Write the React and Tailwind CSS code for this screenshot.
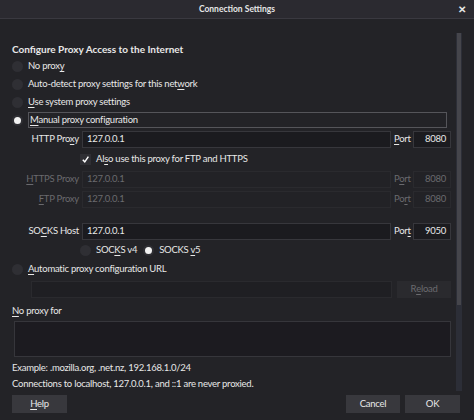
import React from "react";

const U = ({ children }) => <span className="underline underline-offset-[2px] decoration-[1px]">{children}</span>;

function Radio({ checked }) {
  return (
    <span className="w-[11px] h-[11px] rounded-full bg-[#2f2f34] flex items-center justify-center shrink-0">
      {checked && <span className="w-[7px] h-[7px] rounded-full bg-[#f2f2f2]" />}
    </span>
  );
}

function Input({ value, disabled, className = "" }) {
  return (
    <div
      className={`h-[17px] flex items-center px-[4px] border ${
        disabled ? "bg-[#222226] border-[#2a2a2e] text-[#6a6a6e]" : "bg-[#1b1b1f] border-[#37373c] text-[#e8e8e8]"
      } ${className}`}
    >
      {value}
    </div>
  );
}

function ProxyRow({ label, value, port, disabled, portLabel }) {
  const c = disabled ? "text-[#6a6a6e]" : "text-[#e8e8e8]";
  return (
    <div className="h-[18px] flex items-center">
      <div className={`w-[67px] text-right ${c} whitespace-nowrap`}>{label}</div>
      <Input value={value} disabled={disabled} className="ml-[3px] flex-1" />
      <div className={`w-[18px] ml-[3px] ${c}`}>{portLabel}</div>
      <Input value={port} disabled={disabled} className="ml-[1px] w-[38px] justify-end" />
    </div>
  );
}

export default function App() {
  return (
    <div
      className="w-[474px] h-[420px] bg-[#232327] text-[#e8e8e8] text-[9.5px] tracking-[-0.25px] leading-none flex flex-col overflow-hidden"
      style={{ fontFamily: 'Lato, "Open Sans", sans-serif' }}
    >
      <div className="h-[19px] shrink-0 bg-[#2b2a30] border-b border-[#3a3940] flex items-center relative">
        <div className="flex-1 text-center font-bold text-[8.5px] tracking-normal text-[#e6e6e6]">Connection Settings</div>
        <span className="absolute right-[8px] top-[4px] text-[10px] font-bold text-[#e6e6e6]">✕</span>
      </div>
      <div className="h-[374px] flex">
        <div className="flex-1 pl-[12px] pr-[4px] flex flex-col">
          <div className="mt-[22px] h-[16px] flex items-center text-[10px] tracking-normal font-bold">Configure Proxy Access to the Internet</div>
          <div className="h-[18px] flex items-center gap-[5px]">
            <Radio /> <span>No prox<U>y</U></span>
          </div>
          <div className="h-[18px] flex items-center gap-[5px]">
            <Radio /> <span>Auto-detect proxy settings for this net<U>w</U>ork</span>
          </div>
          <div className="h-[18px] flex items-center gap-[5px]">
            <Radio /> <span><U>U</U>se system proxy settings</span>
          </div>
          <div className="h-[18px] flex items-center gap-[5px]">
            <Radio checked />
            <span className="flex-1 mr-[4px] h-[16px] border border-[#55555a] flex items-center pl-[1px]">
              <span><U>M</U>anual proxy configuration</span>
            </span>
          </div>
          <div className="mt-[1px]">
            <ProxyRow label={<>HTTP Pro<U>x</U>y</>} value="127.0.0.1" port="8080" portLabel={<><U>P</U>ort</>} />
          </div>
          <div className="mt-[2px] h-[18px] flex items-center pl-[68px]">
            <span className="w-[11px] h-[11px] bg-[#2f2f34] flex items-center justify-center">
              <svg width="9" height="9" viewBox="0 0 10 10"><path d="M2 5.2 L4.2 7.6 L8.2 1.8" stroke="#fff" strokeWidth="1.6" fill="none" /></svg>
            </span>
            <span className="ml-[5px]">Al<U>s</U>o use this proxy for FTP and HTTPS</span>
          </div>
          <div className="mt-[2px]">
            <ProxyRow disabled label={<><U>H</U>TTPS Proxy</>} value="127.0.0.1" port="8080" portLabel={<>P<U>o</U>rt</>} />
          </div>
          <div className="mt-[2px]">
            <ProxyRow disabled label={<><U>F</U>TP Proxy</>} value="127.0.0.1" port="8080" portLabel={<>Po<U>r</U>t</>} />
          </div>
          <div className="mt-[14px]">
            <ProxyRow label={<>SO<U>C</U>KS Host</>} value="127.0.0.1" port="9050" portLabel={<>Por<U>t</U></>} />
          </div>
          <div className="mt-[1px] h-[18px] flex items-center pl-[68px]">
            <Radio />
            <span className="ml-[5px]">SOC<U>K</U>S v4</span>
            <span className="ml-[6px]"><Radio checked /></span>
            <span className="ml-[5px]">SOCKS <U>v</U>5</span>
          </div>
          <div className="mt-[1px] h-[18px] flex items-center gap-[5px]">
            <Radio /> <span><U>A</U>utomatic proxy configuration URL</span>
          </div>
          <div className="mt-[2px] h-[18px] flex items-center pl-[19px]">
            <Input value="" disabled className="flex-1 !bg-[#1f1f23]" />
            <div className="ml-[5px] w-[54px] h-[17px] bg-[#2a2a2e] flex items-center justify-center text-[#6a6a6e]">R<U>e</U>load</div>
          </div>
          <div className="mt-[4px] h-[18px] flex items-center">
            <span><U>N</U>o proxy for</span>
          </div>
          <div className="mt-[1px] ml-[2px] h-[36px] bg-[#1c1b20] border border-[#36363b]" />
          <div className="mt-[2px] h-[17px] flex items-center">Example: .mozilla.org, .net.nz, 192.168.1.0/24</div>
          <div className="h-[16px] flex items-center">Connections to localhost, 127.0.0.1, and ::1 are never proxied.</div>
        </div>
        <div className="w-[19px] flex">
          <div className="mt-[14px] ml-[1px] w-[6px] mb-[2px] bg-[#2c2e37] flex flex-col">
            <div className="h-[272px] bg-[#45454b] mx-[1px]" />
          </div>
        </div>
      </div>
      <div className="flex-1 flex items-start pl-[12px] pr-[14px] pt-[2px]">
        <div className="w-[55px] h-[18px] bg-[#38383d] flex items-center justify-center"><span><U>H</U>elp</span></div>
        <div className="flex-1" />
        <div className="w-[54px] h-[18px] bg-[#38383d] flex items-center justify-center">Cancel</div>
        <div className="ml-[5px] w-[55px] h-[18px] bg-[#38383d] flex items-center justify-center">OK</div>
      </div>
    </div>
  );
}
